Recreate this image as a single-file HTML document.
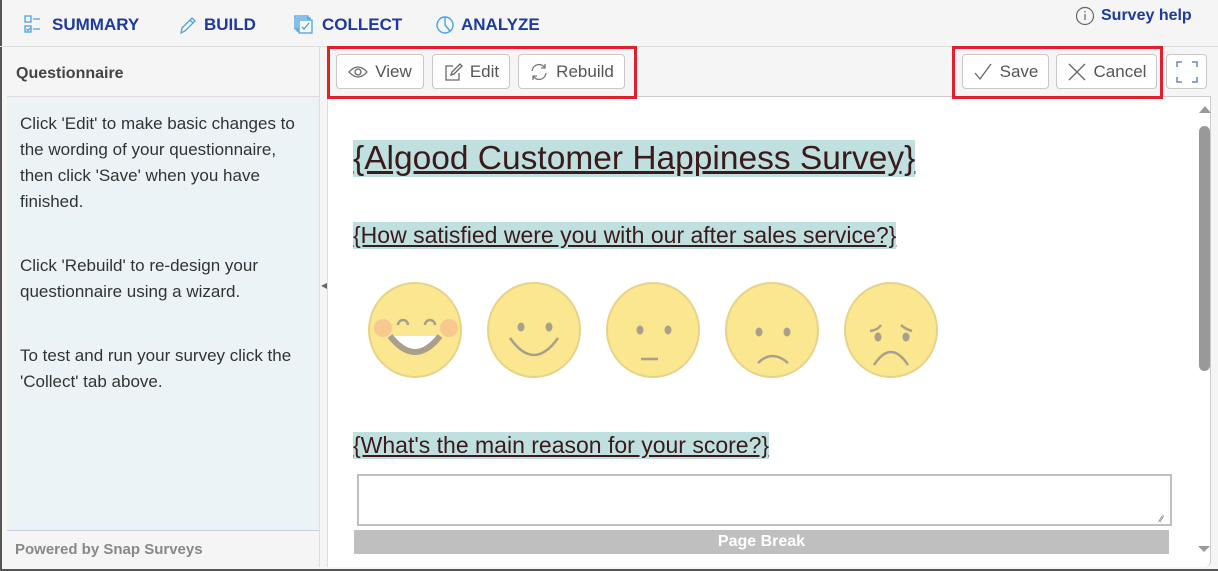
<!DOCTYPE html>
<html><head><style>
*{box-sizing:border-box;margin:0;padding:0}
body{width:1218px;height:571px;background:#f5f5f5;font-family:"Liberation Sans",Arial,sans-serif;position:relative;overflow:hidden}
.nav{position:absolute;top:15px;font-size:17px;font-weight:bold;color:#1d3a9c;display:flex;align-items:center;gap:6px}
.abs{position:absolute}
.btn{position:absolute;top:54px;height:35px;border:1px solid #c8c8c8;border-radius:4px;background:#fff;font-size:17px;color:#555;display:flex;align-items:center;justify-content:center;gap:7px}
.red{position:absolute;border:3px solid #e2202a}
.hl{background:#c0e0e0;color:#3a1a1a;text-decoration:underline;display:inline-block;white-space:nowrap}
.left p{font-size:17px;color:#333;line-height:26px;margin-bottom:38px}
</style></head><body>
<div class="abs" style="left:0;top:0;width:2px;height:571px;background:#555"></div>
<div class="abs" style="left:0;bottom:0;width:1218px;height:2px;background:#555"></div>
<div class="nav" style="left:24px"><svg width="22" height="20" viewBox="0 0 22 20" fill="none" stroke="#4aa3df" stroke-width="1.3"><rect x="1" y="1" width="6" height="6"/><rect x="1" y="11" width="6" height="6"/><path d="M9 4h7M9 14h7M2.5 14l1.5 1.5 3-3"/></svg>SUMMARY</div>
<div class="nav" style="left:178px"><svg width="20" height="20" viewBox="0 0 20 20" fill="none" stroke="#4aa3df" stroke-width="1.3"><path d="M3 18l1-5L14 3l3 3L7 16z M12 5l3 3"/></svg>BUILD</div>
<div class="nav" style="left:294px"><svg width="22" height="20" viewBox="0 0 22 20" fill="none" stroke="#4aa3df" stroke-width="1.3"><rect x="1" y="1" width="13" height="13"/><rect x="3" y="3" width="13" height="13"/><rect x="5" y="5" width="13" height="13" fill="#f5f5f5"/><path d="M8 12l2 2 5-6"/></svg>COLLECT</div>
<div class="nav" style="left:435px"><svg width="20" height="20" viewBox="0 0 20 20" fill="none" stroke="#4aa3df" stroke-width="1.4"><circle cx="10" cy="10" r="8"/><path d="M10 2v8l5 6"/></svg>ANALYZE</div>
<div class="abs" style="left:1075px;top:6px;font-size:16px;font-weight:bold;color:#1d3a9c;display:flex;align-items:center;gap:6px"><svg width="20" height="20" viewBox="0 0 20 20" fill="none" stroke="#666" stroke-width="1.2"><circle cx="10" cy="10" r="8.5"/><path d="M10 8v6M10 5v1.5"/></svg>Survey help</div>
<div class="abs" style="left:0;top:46px;width:1218px;height:1px;background:#ddd"></div>
<div class="abs left" style="left:7px;top:47px;width:313px;height:520px;border-right:1px solid #ddd">
<div style="height:50px;background:#f5f5f5;border-bottom:1px solid #ddd;font-weight:bold;font-size:16px;color:#444;padding:18px 0 0 9px">Questionnaire</div>
<div style="height:433px;background:#ebf3f6;padding:14px 14px 0 13px"><p>Click 'Edit' to make basic changes to the wording of your questionnaire, then click 'Save' when you have finished.</p><p>Click 'Rebuild' to re-design your questionnaire using a wizard.</p><p>To test and run your survey click the 'Collect' tab above.</p></div>
<div style="border-top:1px solid #c8d0dc;height:37px;background:#f5f5f5;font-weight:bold;font-size:15px;color:#888;padding:10px 0 0 8px">Powered by Snap Surveys</div>
</div>
<div class="abs" style="left:321px;top:281px;font-size:8px;color:#666">◀</div>
<div class="abs" style="left:327px;top:47px;width:884px;height:520px;background:#fff;border-left:1px solid #ddd;border-right:1px solid #ccc;border-radius:0 0 6px 0"></div>
<div class="abs" style="left:327px;top:47px;width:884px;height:50px;background:#f5f5f5;border-bottom:1px solid #ccc"></div>
<div class="btn" style="left:336px;width:88px"><svg width="20" height="14" viewBox="0 0 20 14" fill="none" stroke="#666" stroke-width="1.3"><path d="M1 7Q10-3 19 7Q10 17 1 7z"/><circle cx="10" cy="7" r="3"/></svg>View</div>
<div class="btn" style="left:432px;width:78px"><svg width="20" height="20" viewBox="0 0 20 20" fill="none" stroke="#666" stroke-width="1.3"><path d="M10 4H3v14h13v-7M8 13l1-3 8-8 2 2-8 8z"/></svg>Edit</div>
<div class="btn" style="left:518px;width:107px"><svg width="20" height="20" viewBox="0 0 20 20" fill="none" stroke="#777" stroke-width="1.3"><path d="M3 9a7 7 0 0 1 13-3M16 2v4h-4M17 11a7 7 0 0 1-13 3M4 18v-4h4"/></svg>Rebuild</div>
<div class="red" style="left:327px;top:46px;width:310px;height:53px"></div>
<div class="btn" style="left:962px;width:87px"><svg width="20" height="20" viewBox="0 0 20 20" fill="none" stroke="#666" stroke-width="1.3"><path d="M2 11l5 6L18 2"/></svg>Save</div>
<div class="btn" style="left:1056px;width:101px"><svg width="20" height="20" viewBox="0 0 20 20" fill="none" stroke="#666" stroke-width="1.3"><path d="M2 2l16 16M18 2L2 18"/></svg>Cancel</div>
<div class="red" style="left:952px;top:46px;width:211px;height:53px"></div>
<div class="btn" style="left:1166px;width:41px"><svg width="22" height="22" viewBox="0 0 22 22" fill="none" stroke="#6a8ab0" stroke-width="1.5"><path d="M1 6V1h5M16 1h5v5M21 16v5h-5M6 21H1v-5"/></svg></div>
<div class="abs" style="left:1199px;top:106px;width:0;height:0;border-left:6px solid transparent;border-right:6px solid transparent;border-bottom:7px solid #999"></div>
<div class="abs" style="left:1199px;top:126px;width:11px;height:245px;background:#999;border-radius:6px"></div>
<div class="abs" style="left:1198px;top:546px;width:0;height:0;border-left:6px solid transparent;border-right:6px solid transparent;border-top:6px solid #999"></div>
<div class="abs hl" style="left:353px;top:140px;height:37px;font-size:33.5px;line-height:37px">{Algood Customer Happiness Survey}</div>
<div class="abs hl" style="left:353px;top:222px;height:27px;font-size:23px;line-height:27px">{How satisfied were you with our after sales service?}</div>
<div class="abs hl" style="left:353px;top:432px;height:27px;font-size:23px;line-height:27px">{What's the main reason for your score?}</div>
<svg class="abs" style="left:360px;top:280px" width="590" height="104" viewBox="0 0 590 104">
<g fill="#fbe78f" stroke="#e6d38a" stroke-width="2"><ellipse cx="55" cy="50" rx="46" ry="47"/><ellipse cx="174" cy="50" rx="46" ry="47"/><ellipse cx="293" cy="50" rx="46" ry="47"/><ellipse cx="412" cy="50" rx="46" ry="47"/><ellipse cx="531" cy="50" rx="46" ry="47"/></g>
<g fill="#f8c98f"><circle cx="23" cy="48" r="9"/><circle cx="89" cy="48" r="9"/></g>
<path d="M30 56Q55 88 80 56z" fill="#fff"/><path d="M30 56Q55 88 80 56" fill="none" stroke="#a8a08a" stroke-width="6"/>
<g fill="none" stroke="#a8a08a" stroke-width="2.5"><path d="M38 45a5 5 0 0 1 10 0M65 45a5 5 0 0 1 10 0M150 58q24 34 48 0M281 79h17M398 83q14-14 30 0M514 85q17-26 34 0M510 51q8-1 11-6M541 45q4 4 11 6"/></g>
<g fill="#a8a08a"><ellipse cx="161" cy="47" rx="3.5" ry="4.5"/><ellipse cx="189" cy="47" rx="3.5" ry="4.5"/><ellipse cx="280" cy="50" rx="3.5" ry="4.5"/><ellipse cx="308" cy="50" rx="3.5" ry="4.5"/><ellipse cx="399" cy="52" rx="3.5" ry="4.5"/><ellipse cx="427" cy="52" rx="3.5" ry="4.5"/><ellipse cx="518" cy="57" rx="3.5" ry="4.5"/><ellipse cx="546" cy="57" rx="3.5" ry="4.5"/></g>
</svg>
<div class="abs" style="left:357px;top:474px;width:815px;height:52px;border:2px solid #c0c0c0;background:#fff"></div>
<div class="abs" style="left:1160px;top:514px;font-size:9px;color:#555">⁄⁄</div>
<div class="abs" style="left:354px;top:530px;width:815px;height:24px;background:#bfbfbf;color:#fff;font-weight:bold;font-size:16px;text-align:center;line-height:24px">Page Break</div>
</body></html>
